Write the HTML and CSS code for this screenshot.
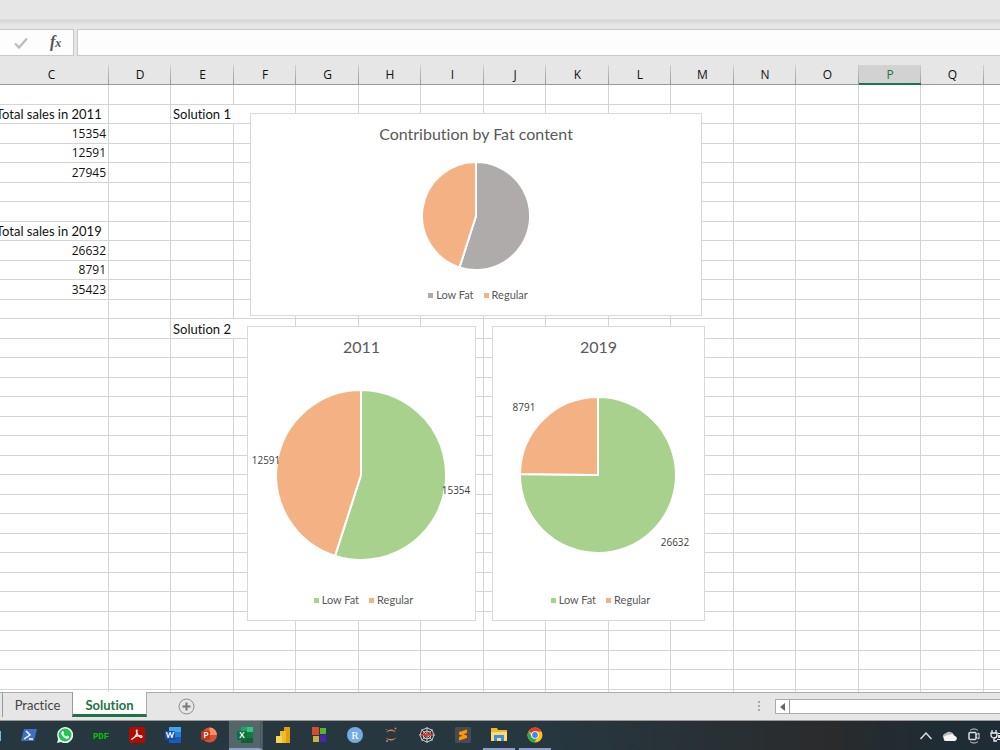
FILE: index.html
```html
<!DOCTYPE html>
<html lang="en">
<head>
    <meta charset="UTF-8">
    <meta name="viewport" content="width=device-width, initial-scale=1.0">
    <title>Sales by Fat content</title>
    <link rel="stylesheet" href="styles.css">
</head>
<body>
    <div class="ribbon"></div>

    <div class="formula-bar">
        <div class="formula-buttons">
            <button class="formula-button" aria-label="Enter">
                <svg width="14" height="12" viewBox="0 0 14 12"><path d="M1 6.500l4 4L13 1.500" fill="none" stroke="#bdbdbd" stroke-width="2.400"/></svg>
            </button>
            <button class="formula-button fx" aria-label="Insert function">f<span class="fx-x">x</span></button>
        </div>
        <input class="formula-input" type="text" aria-label="Formula">
    </div>

    <main class="sheet">
        <table class="grid">
            <thead><tr id="columns"></tr></thead>
            <tbody id="rows"></tbody>
        </table>

        <section class="chart chart-total">
            <h2>Contribution by Fat content</h2>
            <svg class="pie" width="108" height="143" viewBox="-54 -71 108 143">
                <path class="gray" d="M0 0V-54A54 54 0 1 1 -16.500 51.400Z"/>
                <path class="orange" d="M0 0L-16.500 51.400A54 54 0 0 1 0 -54Z"/>
            </svg>
            <div class="legend">
                <span class="key key-gray">Low Fat</span>
                <span class="key key-orange">Regular</span>
            </div>
        </section>

        <section class="chart chart-2011">
            <h2>2011</h2>
            <svg class="pie" width="227" height="230" viewBox="-113 -117 227 230">
                <path class="green" d="M0 0V-85A85 85 0 1 1 -26 80.900Z"/>
                <path class="orange" d="M0 0L-26 80.900A85 85 0 0 1 0 -85Z"/>
                <text x="-95" y="-11">12591</text>
                <text x="95" y="19">15354</text>
            </svg>
            <div class="legend">
                <span class="key key-green">Low Fat</span>
                <span class="key key-orange">Regular</span>
            </div>
        </section>

        <section class="chart chart-2019">
            <h2>2019</h2>
            <svg class="pie" width="211" height="230" viewBox="-105 -117 211 230">
                <path class="green" d="M0 0V-78A78 78 0 1 1 -78 -0.900Z"/>
                <path class="orange" d="M0 0L-78 -0.900A78 78 0 0 1 0 -78Z"/>
                <text x="-74" y="-64">8791</text>
                <text x="77" y="71">26632</text>
            </svg>
            <div class="legend">
                <span class="key key-green">Low Fat</span>
                <span class="key key-orange">Regular</span>
            </div>
        </section>
    </main>

    <div class="tab-bar">
        <button class="tab">Practice</button>
        <button class="tab active">Solution</button>
        <button class="add-sheet" aria-label="New sheet">
            <svg width="17" height="17" viewBox="0 0 17 17"><circle cx="8.500" cy="8.500" r="7.500" fill="none" stroke="#8a8a8a"/><path d="M8.500 4.500v8M4.500 8.500h8" stroke="#777" stroke-width="2"/></svg>
        </button>
        <svg class="grip" width="3" height="12" viewBox="0 0 3 12"><path d="M0 1h2M0 5h2M0 9h2" stroke="#aaa" stroke-width="2"/></svg>
        <div class="scrollbar">
            <button class="scroll-left" aria-label="Scroll left">
                <svg width="5" height="8" viewBox="0 0 5 8"><path d="M5 0v8L0 4z" fill="#666"/></svg>
            </button>
        </div>
    </div>

    <footer class="taskbar">
        <div class="apps">
            <button class="app" aria-label="PowerShell"><svg viewBox="0 0 16 16"><path d="M3 2h13l-3 12H0z" fill="#3d6fc4"/><path d="M5 4l4 4-6 4M8 12h4" fill="none" stroke="#fff" stroke-width="1.500"/></svg></button>
            <button class="app" aria-label="WhatsApp"><svg viewBox="0 0 16 16"><path d="M0 16l1.200-4A8 8 0 1 1 4 14.900z" fill="#f1f7f2"/><circle cx="8" cy="8" r="6.500" fill="#20c554"/><path d="M5 4.200l1.300-.2.900 2-.8 1c.6 1.200 1.500 2 2.700 2.600l1-1.100 2 1c0 1.500-1 2.300-2.300 2.200C7 11.500 4.500 8.500 4.300 6z" fill="#fff"/></svg></button>
            <button class="app" aria-label="PDF"><svg viewBox="0 0 16 16"><text class="pdf" x="8" y="12">PDF</text></svg></button>
            <button class="app" aria-label="Acrobat"><svg viewBox="0 0 16 16"><rect width="16" height="16" rx="2" fill="#b30b00"/><path d="M3 12c3-1 5.500-5 5-9-1 0-1 2 1 5s4 3 4 1.500-5-1-8 1-2 2.500-2 1.500z" fill="none" stroke="#fff" stroke-width="1.200"/></svg></button>
            <button class="app" aria-label="Word"><svg viewBox="0 0 16 16"><path d="M4 0h12v5H4z" fill="#41a5ee"/><path d="M4 5h12v5H4z" fill="#2b7cd3"/><path d="M4 10h12v6H4z" fill="#185abd"/><rect y="4" width="10" height="9" rx="1" fill="#174ea6"/><text class="letter" x="5" y="11">W</text></svg></button>
            <button class="app" aria-label="PowerPoint"><svg viewBox="0 0 16 16"><circle cx="8.500" cy="8" r="7.500" fill="#d35230"/><path d="M8.500.5A7.500 7.500 0 0 1 16 8H8.500z" fill="#ff8f6b"/><rect y="4" width="9" height="9" rx="1" fill="#b9371c"/><text class="letter" x="5" y="11">P</text></svg></button>
            <button class="app current" aria-label="Excel"><svg viewBox="0 0 16 16"><path d="M4 0h6v8H4z" fill="#21a366"/><path d="M10 0h6v5h-6z" fill="#33c481"/><path d="M10 5h6v6h-6z" fill="#107c41"/><path d="M4 11h12v5H4z" fill="#185c37"/><rect y="4" width="10" height="9" rx="1" fill="#0d7040"/><text class="letter" x="5" y="11">X</text></svg></button>
            <button class="app" aria-label="Power BI"><svg viewBox="0 0 16 16"><path d="M9 0h6v16H9z" fill="#dfa00e"/><path d="M5 4h6v12H5z" fill="#f0bd27"/><path d="M1 9h6v7H1z" fill="#f7d45c"/></svg></button>
            <button class="app" aria-label="Color tiles"><svg viewBox="0 0 16 16"><path d="M1 0h7v8H1z" fill="#d84a32"/><path d="M9 1h6v6H9z" fill="#52b833"/><path d="M2 9h6v6H2z" fill="#c5b43c"/><path d="M9 8h6v7H9z" fill="#4a23b4"/></svg></button>
            <button class="app" aria-label="RStudio"><svg viewBox="0 0 16 16"><circle cx="8" cy="8" r="8" fill="#74abe2"/><text class="rstudio" x="8" y="12">R</text></svg></button>
            <button class="app" aria-label="Jupyter"><svg viewBox="0 0 16 16"><path d="M3 5.500c2-4 8-4 10 0-3-2-7-2-10 0zM3 10.500c2 4 8 4 10 0-3 2-7 2-10 0z" fill="#e98035"/><circle cx="12.500" cy="1.500" r=".9" fill="#999"/><circle cx="4" cy="14" r="1" fill="#999"/><circle cx="3.500" cy="2.500" r=".6" fill="#999"/></svg></button>
            <button class="app" aria-label="Spyder"><svg viewBox="0 0 16 16"><path d="M8 1l5 2 2 5-2 5-5 2-5-2-2-5 2-5zM8 4l3 1 1 3-1 3-3 1-3-1-1-3 1-3zM8 0v16M0 8h16M2.500 2.500l11 11M13.500 2.500l-11 11" fill="none" stroke="#c9c9c9"/><path d="M2 9l3-2 2 2 3-3 2 2 2-1" fill="none" stroke="#e02b20" stroke-width="1.800"/></svg></button>
            <button class="app" aria-label="Sublime Text"><svg viewBox="0 0 16 16"><rect width="16" height="16" rx="1" fill="#4b4b4b"/><path d="M4 5l8-2.500v3.500L8.500 7.200 12 8.500V11l-8 2.500V10l3.500-1.200L4 7.500z" fill="#ff9800"/></svg></button>
            <button class="app open" aria-label="File Explorer"><svg viewBox="0 0 16 16"><path d="M0 1h6l1 2h9v11H0z" fill="#f2b632"/><path d="M0 5h16v9H0z" fill="#ffda71"/><path d="M3 14V8h10v6h-3v-3H6v3z" fill="#3b91e0"/></svg></button>
            <button class="app open" aria-label="Chrome"><svg viewBox="0 0 16 16"><circle cx="8" cy="8" r="7.500" fill="#fbc116"/><path d="M8 8L1.500 4.200A7.500 7.500 0 0 1 14.500 4.500H8z" fill="#e33b2e"/><path d="M1.500 4.200A7.500 7.500 0 0 0 7.500 15.500L10.500 10H5z" fill="#2da94f"/><circle cx="8" cy="8" r="3.800" fill="#fff"/><circle cx="8" cy="8" r="2.900" fill="#4285f4"/></svg></button>
        </div>
        <div class="tray">
            <svg width="14" height="16" viewBox="0 0 14 16"><path d="M1.500 11L7 5l5.500 6" fill="none" stroke="#ddd" stroke-width="1.500"/></svg>
            <svg width="16" height="16" viewBox="0 0 16 16"><path d="M1 10a4 4 0 0 1 3-5 5 5 0 0 1 8 2z" fill="#bbb"/><path d="M3 13a3 3 0 0 1 0-5l3-1 4-1 3 2a2.600 2.600 0 0 1 0 5z" fill="#f4f4f4"/></svg>
            <svg width="14" height="16" viewBox="0 0 14 16"><path d="M3 2.500c2-2 6-2 8 0M3 13.500c2 2 6 2 8 0" fill="none" stroke="#ccc"/><rect x="2" y="4.500" width="7" height="7" rx="1" fill="none" stroke="#ddd" stroke-width="1.500"/><path d="M9 7l3-2v6l-3-2" fill="none" stroke="#ddd"/></svg>
            <svg width="26" height="16" viewBox="0 0 26 16"><path d="M2 2v3M6 2v3M1 5h6v2a3 3 0 0 1-6 0zM4 10v3h3" fill="none" stroke="#eee" stroke-width="1.300"/><path d="M8 5.500h16v6H7" fill="none" stroke="#eee"/><path d="M8 7h13v3H8z" fill="#ddd"/></svg>
        </div>
    </footer>

    <script src="sheet.js"></script>
</body>
</html>
```
FILE: styles.css
```css
* {
    box-sizing: border-box;
}

body {
    display: flex;
    flex-direction: column;
    height: 100vh;
    margin: 0;
    overflow: hidden;
    background-color: #e6e6e6;
    color: #111;
    font-family: Lato, "Open Sans", sans-serif;
    font-size: 13px;
    font-variant-ligatures: none;
}

button {
    padding: 0;
    border: none;
    background: none;
    color: inherit;
    font: inherit;
    font-variant-ligatures: none;
    cursor: pointer;
}

svg {
    display: block;
    flex-shrink: 0;
}

/* Ribbon and formula bar */
.ribbon {
    flex-shrink: 0;
    height: 29px;
    background: linear-gradient(#e6e6e6 19px, #d4d4d4 20px, #e6e6e6 25px);
}

.formula-bar {
    display: flex;
    flex-shrink: 0;
    gap: 3px;
    height: 27px;
    margin-bottom: 9px;
}

.formula-buttons {
    display: flex;
    align-items: center;
    gap: 22px;
    width: 74px;
    padding-left: 14px;
    border: 1px solid #c8c8c8;
    border-left: none;
    background-color: #fdfdfd;
}

.fx {
    color: #555;
    font-family: "Liberation Serif", serif;
    font-size: 16px;
    font-style: italic;
    font-weight: bold;
    line-height: 20px;
}

.fx-x {
    font-size: 12px;
}

.formula-input {
    flex: 1;
    min-width: 0;
    padding: 0 6px;
    border: 1px solid #c8c8c8;
    border-right: none;
    background-color: #fdfdfd;
    font: inherit;
    outline: none;
}

/* Worksheet */
.sheet {
    position: relative;
    flex: 1;
    min-height: 0;
    overflow: hidden;
    background-color: #fff;
}

/* The sheet is scrolled a little way into column C */
.grid {
    width: max-content;
    margin-left: -6px;
    border-spacing: 0;
    table-layout: fixed;
}

.grid th,
.grid td {
    width: 63px;
    min-width: 63px;
    max-width: 63px;
    padding: 0;
    white-space: nowrap;
}

.grid th:nth-child(even),
.grid td:nth-child(even) {
    width: 62px;
    min-width: 62px;
    max-width: 62px;
}

.grid th:first-child,
.grid td:first-child {
    width: 115px;
    min-width: 115px;
    max-width: 115px;
}

.grid th {
    height: 20px;
    border-bottom: 1px solid #999;
    background: linear-gradient(#d0d0d0, #999) right / 1px 100% no-repeat #e6e6e6;
    font-family: "Open Sans", sans-serif;
    font-size: 12px;
    font-weight: normal;
    line-height: 18px;
}

.grid th.selected {
    border-bottom: 2px solid #217346;
    background-color: #d2d2d2;
    color: #217346;
    line-height: 17px;
}

.grid td {
    height: 19px;
    padding: 0 2px;
    border-right: 1px solid #d4d4d4;
    border-bottom: 1px solid #d4d4d4;
    line-height: 18px;
}

.grid tbody tr:nth-child(odd) td {
    height: 20px;
}

.grid td.number {
    font-family: "Open Sans", sans-serif;
    font-size: 12px;
    text-align: right;
}

.grid td.spill {
    border-right-color: transparent;
}

/* Charts float over the cells */
.chart {
    position: absolute;
    display: flex;
    flex-direction: column;
    align-items: center;
    padding-top: 10px;
    padding-bottom: 13px;
    border: 1px solid #d9d9d9;
    background-color: #fff;
    color: #595959;
}

.chart h2 {
    margin: 0 0 1px;
    font-size: 16px;
    font-weight: normal;
    line-height: 20px;
}

.chart-total {
    top: 48px;
    left: 250px;
    width: 452px;
}

.chart-2011 {
    top: 261px;
    left: 247px;
    width: 229px;
}

.chart-2019 {
    top: 261px;
    left: 492px;
    width: 213px;
}

.pie path {
    stroke: #fff;
    stroke-width: 2px;
    stroke-linejoin: round;
}

.pie text {
    fill: #404040;
    font-family: "Open Sans", sans-serif;
    font-size: 10px;
    text-anchor: middle;
}

.gray { fill: #afabab; }
.orange { fill: #f4b183; }
.green { fill: #a9d18e; }

.legend {
    display: flex;
    gap: 10px;
    padding-left: 4px;
    font-size: 11px;
    line-height: 14px;
}

.chart-2011 .legend,
.chart-2019 .legend {
    margin-top: 5px;
}

.key {
    display: flex;
    align-items: center;
    gap: 3px;
}

.key::before {
    content: "";
    width: 5px;
    height: 5px;
}

.key-gray::before { background-color: #afabab; }
.key-orange::before { background-color: #f4b183; }
.key-green::before { background-color: #a9d18e; }

/* Sheet tabs */
.tab-bar {
    display: flex;
    flex-shrink: 0;
    align-items: center;
    height: 29px;
    padding-left: 2px;
    border-top: 1px solid #ababab;
    border-bottom: 1px solid #999;
}

.tab {
    align-self: flex-start;
    width: 70px;
    height: 24px;
    border-left: 1px solid #999;
    color: #444;
}

.tab.active {
    width: 75px;
    height: 25px;
    margin-top: -1px;
    padding-top: 3px;
    border-right: 1px solid #ababab;
    border-bottom: 3px solid #217346;
    background-color: #fff;
    color: #217346;
    font-weight: bold;
}

.add-sheet {
    margin-left: 31px;
}

.grip {
    margin-left: auto;
}

.scrollbar {
    width: 225px;
    height: 15px;
    margin-left: 14px;
    border: 1px solid #ababab;
    border-right: none;
    background-color: #fff;
}

.scroll-left {
    display: flex;
    align-items: center;
    justify-content: center;
    width: 14px;
    height: 13px;
    border-right: 1px solid #999;
}

/* Taskbar */
.taskbar {
    display: flex;
    flex-shrink: 0;
    justify-content: space-between;
    height: 29px;
    background: linear-gradient(90deg, #263740, #263740 55%, #2a2b2c 83%, #1d2c35 95%);
}

.apps {
    display: flex;
    gap: 4px;
    padding-left: 14px;
}

/* Edge of the icon that is cut off on the left */
.apps::before {
    content: "";
    width: 1px;
    height: 10px;
    margin: 10px -1px 0 -14px;
    background-color: #6cbcec;
}

.apps .app:first-child {
    margin-left: 9px;
}

.app {
    display: flex;
    justify-content: center;
    width: 32px;
    height: 29px;
    padding-top: 6px;
}

.app svg {
    width: 16px;
    height: 16px;
}

.app.current {
    width: 34px;
    border-right: 3px double #46565b;
    border-bottom: 2px solid #8c9fc8;
    background-color: #53666a;
}

.app.open {
    border-bottom: 2px solid #8c9fc8;
}

.letter {
    fill: #fff;
    font-size: 8px;
    font-weight: bold;
    text-anchor: middle;
}

.rstudio {
    fill: #fff;
    font-family: "Liberation Serif", serif;
    font-size: 11px;
    text-anchor: middle;
}

.app .pdf {
    fill: #00c800;
    font-family: "Liberation Mono", monospace;
    font-size: 9px;
    font-weight: bold;
    text-anchor: middle;
}

.tray {
    display: flex;
    align-items: center;
    gap: 9px;
    margin-right: -16px;
}
```
FILE: sheet.js
```js
const columns = 'CDEFGHIJKLMNOPQ'.split('');
const rowCount = 50;

// Filled cells, by column and row
const cells = {
    C2: 'Total sales in 2011',
    C3: 15354,
    C4: 12591,
    C5: 27945,
    C8: 'Total sales in 2019',
    C9: 26632,
    C10: 8791,
    C11: 35423,
    E2: 'Solution 1',
    E13: 'Solution 2'
};

// Unlabelled column that runs off the right edge
columns.push('');

const header = document.getElementById('columns');
columns.forEach(name => {
    const th = document.createElement('th');
    th.textContent = name;
    if (name === 'P') th.className = 'selected';
    header.appendChild(th);
});

const body = document.getElementById('rows');
for (let row = 1; row <= rowCount; row++) {
    const tr = document.createElement('tr');
    columns.forEach(name => {
        const td = document.createElement('td');
        const value = cells[name + row];
        if (value !== undefined) {
            td.textContent = value;
            if (typeof value === 'number') td.className = 'number';
            // Labels in E run up to the next cell
            if (name === 'E') td.className = 'spill';
        }
        tr.appendChild(td);
    });
    body.appendChild(tr);
}
```
